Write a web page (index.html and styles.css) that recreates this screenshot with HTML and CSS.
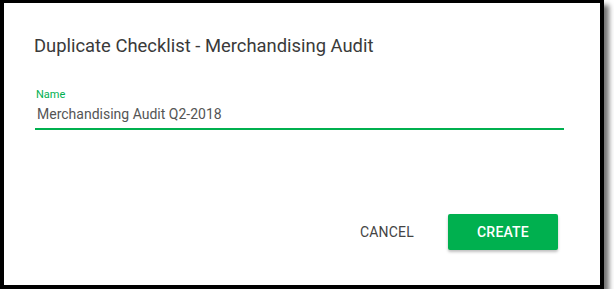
FILE: index.html
```html
<!DOCTYPE html>
<html lang="en">

<head>
    <meta charset="UTF-8">
    <meta name="viewport" content="width=device-width, initial-scale=1.0">
    <title>Duplicate Checklist</title>
    <link rel="stylesheet" href="styles.css">
</head>

<body>
    <div class="dialog">
        <h2 class="title">Duplicate Checklist - Merchandising Audit</h2>
        <div class="field">
            <label class="field-label" for="name">Name</label>
            <input class="field-input" id="name" type="text" value="Merchandising Audit Q2-2018">
        </div>
        <div class="actions">
            <button class="btn btn-text">CANCEL</button>
            <button class="btn btn-primary">CREATE</button>
        </div>
    </div>
</body>

</html>
```

FILE: styles.css
```css
body {
    font-family: Roboto, "Liberation Sans", sans-serif;
    margin: 0;
    padding: 0;
    background-color: #ffffff;
}

.dialog {
    width: 596px;
    height: 282px;
    box-sizing: content-box;
    border: 4px solid #000;
    border-top-width: 3px;
    background: #fff;
    box-shadow: 5px 5px 5px rgba(0, 0, 0, 0.55);
    display: flex;
    flex-direction: column;
    padding: 0;
}

.title {
    margin: 31px 0 0 30px;
    font-size: 18.4px;
    font-weight: 400;
    line-height: 24px;
    color: #3a3a3a;
}

.field {
    display: flex;
    flex-direction: column;
    margin: 30px 36px 0 31px;
}

.field-label {
    font-size: 11px;
    line-height: 13px;
    color: #00b04f;
    margin-left: 1px;
}

.field-input {
    font-family: inherit;
    font-size: 14px;
    color: #555;
    border: none;
    border-bottom: 2px solid #00b04f;
    outline: none;
    padding: 3px 0 4px 2px;
    line-height: 20px;
}

.actions {
    display: flex;
    justify-content: flex-end;
    align-items: center;
    gap: 18px;
    margin: auto 42px 35px 0;
}

.btn {
    font-family: inherit;
    font-size: 14px;
    border: none;
    cursor: pointer;
    letter-spacing: 0.2px;
}

.btn-text {
    background: none;
    color: #444;
    padding: 10px 16px;
}

.btn-primary {
    background-color: #00b04f;
    color: #fff;
    font-weight: 500;
    width: 110px;
    height: 36px;
    border-radius: 2px;
    box-shadow: 0 2px 3px rgba(0, 0, 0, 0.25);
}
```
